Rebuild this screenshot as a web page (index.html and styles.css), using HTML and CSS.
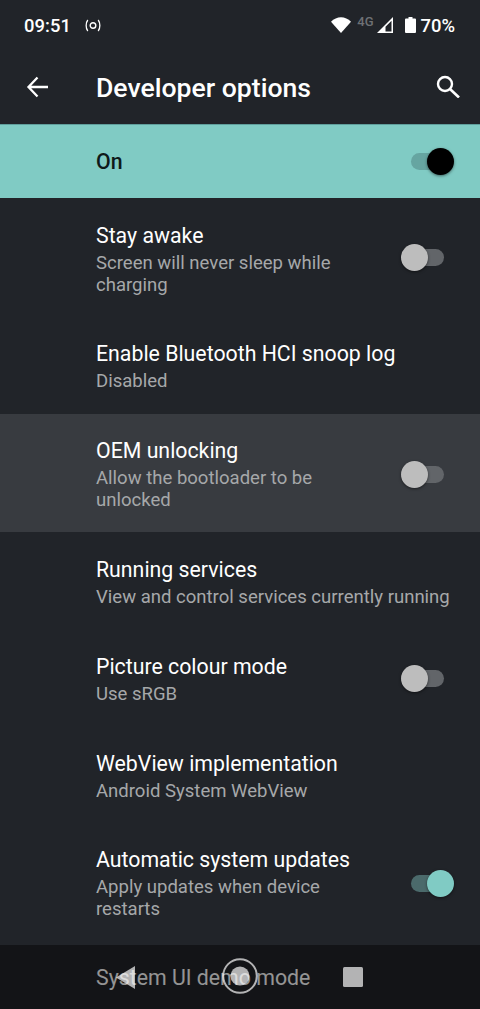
FILE: index.html
```html
<!DOCTYPE html>
<html lang="en">
<head>
<meta charset="utf-8">
<title>Developer options</title>
<link rel="stylesheet" href="styles.css">
</head>
<body>
<div class="screen">
  <div class="status">
    <span class="time">09:51</span>
    <svg class="hotspot" width="16" height="13" viewBox="0 0 16 13"><circle cx="8" cy="6.500" r="2.800" fill="none" stroke="#fff" stroke-width="1.400"/><path d="M2.800 1C.6 3.800.6 9.200 2.800 12M13.200 1c2.200 2.800 2.200 8.200 0 11" fill="none" stroke="#fff" stroke-width="1.300"/></svg>
    <span class="status-right">
      <svg class="wifi" width="20" height="16" viewBox="0 0 20 16"><path d="M0 4.800C5.500 -1.400 14.500 -1.400 20 4.800L10 16Z" fill="#fff"/></svg>
      <span class="net">4G</span>
      <svg class="signal" width="16" height="16" viewBox="0 0 16 16"><path d="M16 0V16H0ZM14.500 3.700 8.500 9.800V14.500H14.500Z" fill="#fff" fill-rule="evenodd"/></svg>
      <svg class="batt" width="11" height="16" viewBox="0 0 11 16"><path d="M3.500 0h4v1.500H10a1 1 0 0 1 1 1V15a1 1 0 0 1-1 1H1a1 1 0 0 1-1-1V2.500a1 1 0 0 1 1-1h2.500Z" fill="#fff"/></svg>
      <span class="pct">70%</span>
    </span>
  </div>
  <header class="appbar">
    <svg class="back" width="22" height="22" viewBox="0 0 22 22"><path d="M22 11H2.500M11.500 1.500 2.500 11l9 9.500" fill="none" stroke="#fff" stroke-width="2.300"/></svg>
    <h1>Developer options</h1>
    <svg class="search" width="24" height="23" viewBox="0 0 24 23"><circle cx="9" cy="9" r="7" fill="none" stroke="#fff" stroke-width="2.400"/><path d="M14 14 23 22.500" stroke="#fff" stroke-width="2.600" fill="none"/></svg>
  </header>
  <div class="master">
    <span class="master-label">On</span>
    <span class="switch on black"><i></i></span>
  </div>
  <div class="row tall first">
    <div class="text"><div class="t">Stay awake</div><div class="s">Screen will never sleep while charging</div></div>
    <span class="switch off"><i></i></span>
  </div>
  <div class="row bt">
    <div class="text wide"><div class="t">Enable Bluetooth HCI snoop log</div><div class="s">Disabled</div></div>
  </div>
  <div class="row tall hi">
    <div class="text"><div class="t">OEM unlocking</div><div class="s">Allow the bootloader to be unlocked</div></div>
    <span class="switch off"><i></i></span>
  </div>
  <div class="row">
    <div class="text wide"><div class="t">Running services</div><div class="s">View and control services currently running</div></div>
  </div>
  <div class="row">
    <div class="text"><div class="t">Picture colour mode</div><div class="s">Use sRGB</div></div>
    <span class="switch off"><i></i></span>
  </div>
  <div class="row">
    <div class="text"><div class="t">WebView implementation</div><div class="s">Android System WebView</div></div>
  </div>
  <div class="row tall">
    <div class="text"><div class="t">Automatic system updates</div><div class="s">Apply updates when device restarts</div></div>
    <span class="switch on"><i></i></span>
  </div>
  <div class="row last">
    <div class="text"><div class="t">System UI demo mode</div></div>
  </div>
  <nav class="navbar">
    <svg class="nav-back" width="19" height="23" viewBox="0 0 19 23"><path d="M19 0V23L0 11.500Z" fill="#fff" fill-opacity=".68"/></svg>
    <svg class="nav-home" width="36" height="36" viewBox="0 0 36 36"><circle cx="18" cy="18" r="16.800" fill="none" stroke="#fff" stroke-opacity=".68" stroke-width="2"/><circle cx="18" cy="18" r="9.500" fill="#fff" fill-opacity=".68"/></svg>
    <svg class="nav-recent" width="20" height="20" viewBox="0 0 20 20"><rect width="20" height="20" rx="1.500" fill="#fff" fill-opacity=".68"/></svg>
  </nav>
</div>
</body>
</html>
```

FILE: styles.css
```css
* { box-sizing: border-box; }
html, body { margin: 0; padding: 0; }
body { background: #212429; font-family: Roboto, "Liberation Sans", sans-serif; }
.screen { position: relative; width: 480px; height: 1009px; overflow: hidden; background: #212429; color: #fff; }

.status { height: 50px; display: flex; align-items: center; padding: 0 25px 0 24px; }
.time { font-size: 18.400px; font-weight: 500; letter-spacing: .1px; }
.hotspot { margin-left: 14px; }
.status-right { margin-left: auto; display: flex; align-items: center; }
.wifi { margin-top: -1px; }
.net { font-size: 13px; line-height: 13px; font-weight: 500; color: #6e7175; margin: -7px 0 0 6px; }
.signal { margin-left: 3px; }
.batt { margin-left: 12px; }
.pct { font-size: 18.400px; font-weight: 500; margin-left: 5px; }

.appbar { height: 74px; display: flex; align-items: center; padding: 0 20px 0 26px; }
.appbar h1 { margin: 0 0 0 48px; font-size: 26.600px; font-weight: 500; flex: 1; }
.search { margin-bottom: 1px; }

.master { height: 74px; background: #80cbc4; display: flex; align-items: center; justify-content: space-between; padding: 0 26px 0 96px; border-top: 1px solid #5f9e9c; }
.master-label { font-size: 21.300px; font-weight: 500; color: #0e1a1a; }

.row { height: 97px; display: flex; align-items: center; padding: 2px 26px 0 96px; justify-content: space-between; flex-shrink: 0; }
.row.tall { height: 118px; }
.row.first { padding-top: 4px; }
.row.bt { height: 98px; padding-top: 1px; }
.row.hi { background: #383b40; }
.row.last { height: 74px; padding-top: 0; }
.text { width: 265px; }
.text.wide { width: 370px; }
.t { font-size: 21.300px; line-height: 28px; color: #fff; }
.s { font-size: 18.540px; line-height: 22px; color: #a6a8aa; margin-top: 2px; }

.switch { position: relative; display: block; width: 43px; height: 27px; flex-shrink: 0; }
.first .switch { margin-top: -4px; }
.switch::before { content: ""; position: absolute; left: 3px; right: 0; top: 5px; height: 17px; border-radius: 9px; background: #626569; }
.switch i { position: absolute; left: 0; top: 0; width: 27px; height: 27px; border-radius: 50%; background: #bdbdbd; box-shadow: 0 1px 3px rgba(0,0,0,.5); }
.switch.off { margin-right: 10px; }
.switch.on::before { background: #4b6a6b; left: 0; right: 3px; }
.switch.on i { left: auto; right: 0; background: #80cbc4; }
.switch.black::before { background: #66a5a1; }
.switch.black i { background: #000; }

.navbar { position: absolute; left: 0; right: 0; bottom: 0; height: 64px; background: rgba(0,0,0,.42); }
.nav-back { position: absolute; left: 116px; top: 21px; }
.nav-home { position: absolute; left: 222px; top: 13px; }
.nav-recent { position: absolute; left: 343px; top: 22px; }
```
